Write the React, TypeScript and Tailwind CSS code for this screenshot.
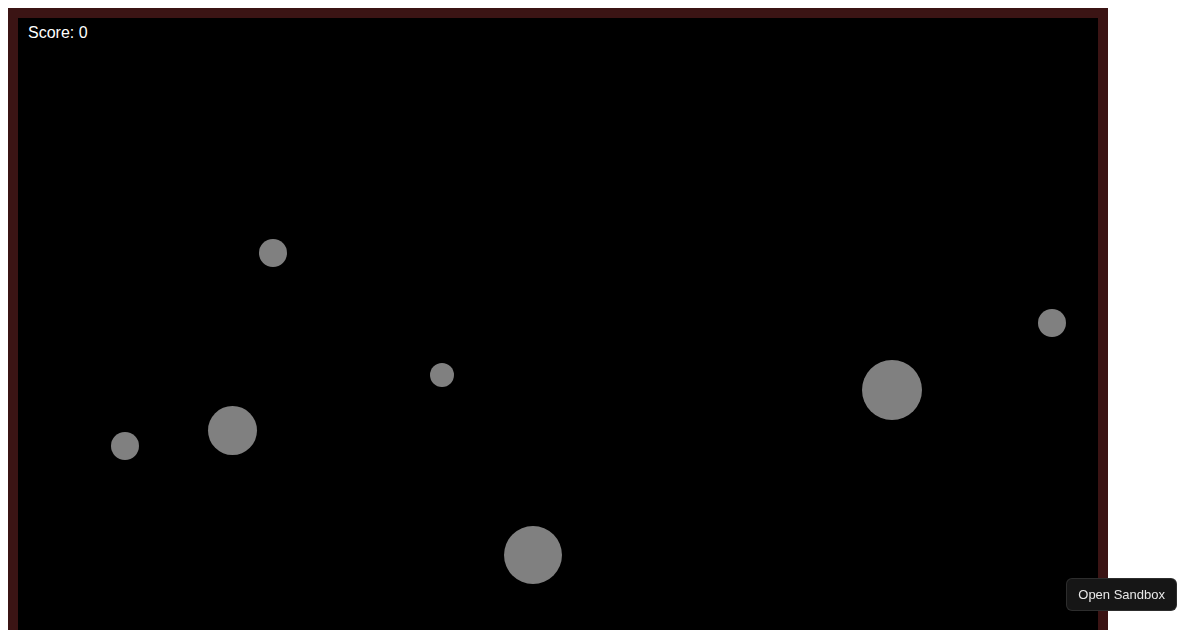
const BALLS = [
  "left-[241px] top-[221px] h-[28px] w-[28px]",
  "left-[1020px] top-[291px] h-[28px] w-[28px]",
  "left-[412px] top-[345px] h-[24px] w-[24px]",
  "left-[844px] top-[342px] h-[60px] w-[60px]",
  "left-[190px] top-[388px] h-[49px] w-[49px]",
  "left-[93px] top-[414px] h-[28px] w-[28px]",
  "left-[486px] top-[508px] h-[58px] w-[58px]",
];

export default function App() {
  return (
    <div className="h-screen overflow-hidden bg-white" style={{ fontFamily: '"Liberation Sans", Arial, sans-serif' }}>
      <div className="m-2 w-[1100px] border-[10px] border-[#3b1414]">
        <div className="relative h-[700px] bg-black pl-[10px] pt-[7px]">
          <div className="text-[16px] leading-[16px] text-white">Score: 0</div>
          {BALLS.map((b, i) => (
            <div key={i} className={`absolute rounded-full bg-[#808080] ${b}`} />
          ))}
        </div>
      </div>
      <button className="fixed bottom-[19px] right-[23px] rounded-[6px] border border-white/10 bg-[#161616] px-[11px] py-2 text-[13px] leading-[15px] text-[#e8e8e8]">
        Open Sandbox
      </button>
    </div>
  );
}
